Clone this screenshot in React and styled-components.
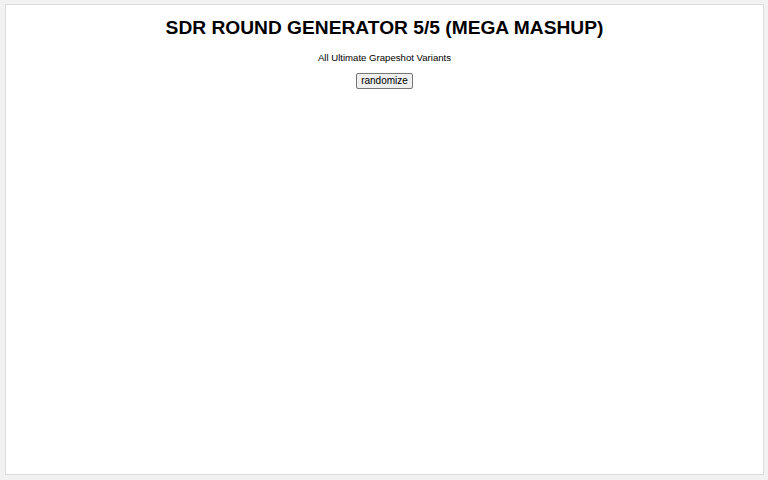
import React from 'react';
import styled, { createGlobalStyle } from 'styled-components';

const GlobalStyle = createGlobalStyle`
  html, body {
    margin: 0;
    padding: 0;
    background: #f2f2f2;
    font-family: "Liberation Sans", Arial, sans-serif;
  }
`;

const Page = styled.div`
  padding: 4px 4px 4px 5px;
  height: 480px;
  box-sizing: border-box;
`;

const Card = styled.div`
  height: 471px;
  box-sizing: border-box;
  background: #fff;
  border: 1px solid #dcdcdc;
  display: flex;
  flex-direction: column;
  align-items: center;
  padding-top: 12px;
`;

const Title = styled.h1`
  margin: 0;
  font-size: 19.2px;
  line-height: 22px;
  font-weight: bold;
  color: #000;
`;

const Subtitle = styled.p`
  margin: 13px 0 0;
  font-size: 9.6px;
  line-height: 11px;
  color: #000;
`;

const Button = styled.button`
  margin-top: 10px;
  font-family: "Liberation Sans", Arial, sans-serif;
  font-size: 10px;
  line-height: 12px;
  padding: 1px 4px;
  background: #efefef;
  border: 1px solid #767676;
  border-radius: 2px;
  color: #000;
`;

export default function App() {
  return (
    <>
      <GlobalStyle />
      <Page>
        <Card>
          <Title>SDR ROUND GENERATOR 5/5 (MEGA MASHUP)</Title>
          <Subtitle>All Ultimate Grapeshot Variants</Subtitle>
          <Button type="button">randomize</Button>
        </Card>
      </Page>
    </>
  );
}
